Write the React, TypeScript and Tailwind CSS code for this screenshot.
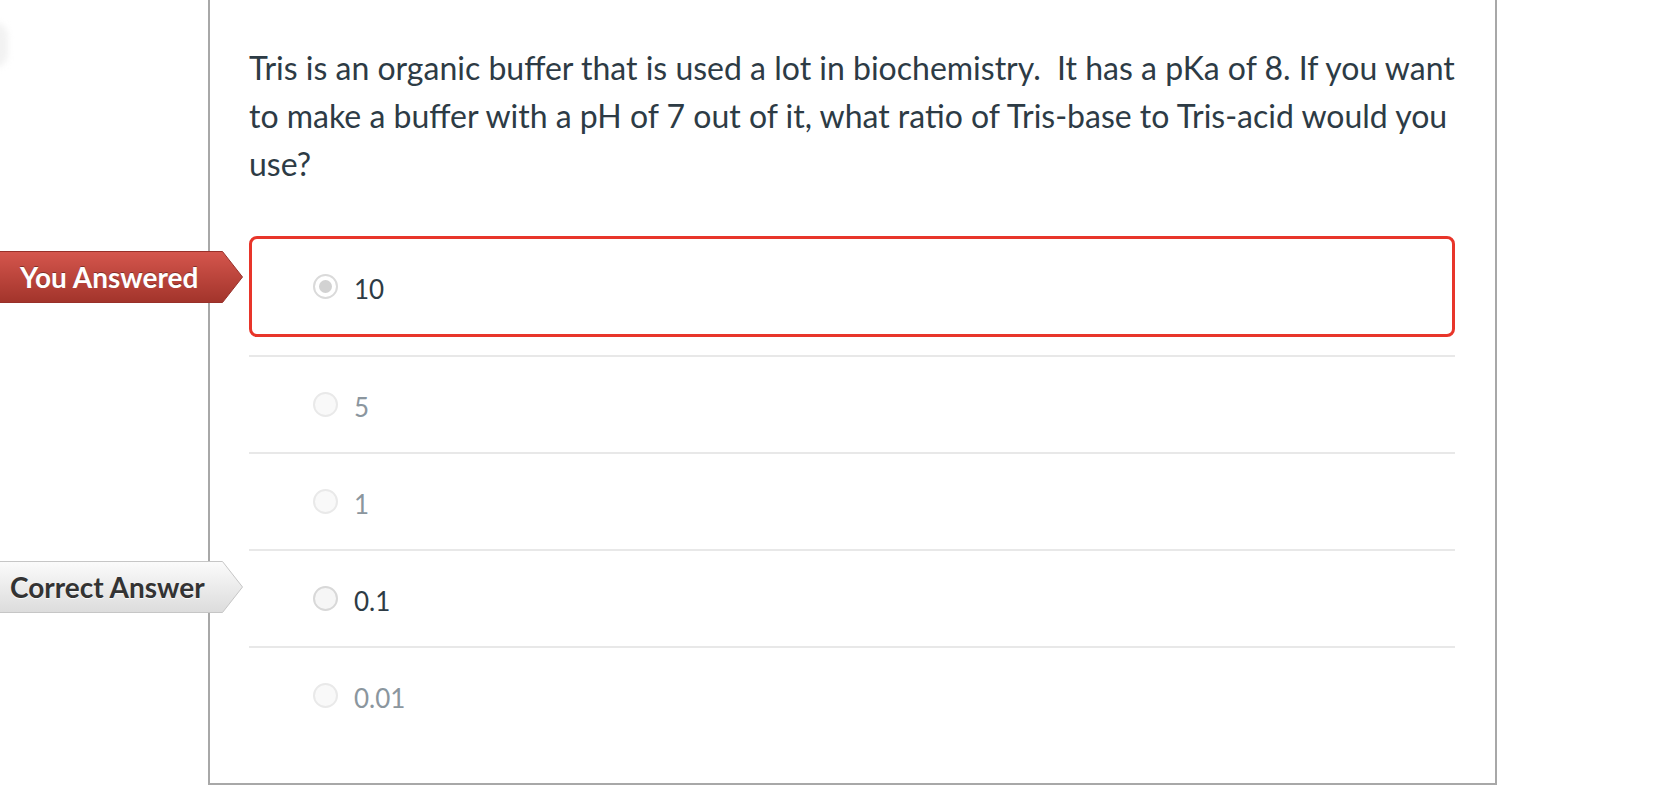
import React from "react";

function Badge({
  label,
  variant,
}: {
  label: string;
  variant: "red" | "gray";
}) {
  const red = variant === "red";
  const gid = red ? "gradRed" : "gradGray";
  return (
    <div className="relative h-[52px] w-[244px]">
      <svg
        className="absolute left-0 top-0"
        width="244"
        height="52"
        viewBox="0 0 244 52"
      >
        <defs>
          <linearGradient id={gid} x1="0" y1="0" x2="0" y2="1">
            {red ? (
              <>
                <stop offset="0" stopColor="#d5564d" />
                <stop offset="1" stopColor="#a2342b" />
              </>
            ) : (
              <>
                <stop offset="0" stopColor="#fbfbfb" />
                <stop offset="1" stopColor="#dcdcdc" />
              </>
            )}
          </linearGradient>
        </defs>
        <path
          d="M-2 0.5 H222.5 L242.5 26 L222.5 51.5 H-2 Z"
          fill={`url(#${gid})`}
          stroke={red ? "#98302a" : "#c6c6c6"}
          strokeWidth="1"
        />
      </svg>
      <div
        className={
          red
            ? "relative flex h-full w-[224px] items-center whitespace-nowrap pl-[20px] text-[28px] font-bold text-white [text-shadow:0_-1px_0_rgba(0,0,0,0.35)]"
            : "relative flex h-full w-[224px] items-center whitespace-nowrap pl-[10px] text-[28px] font-bold text-[#333333] [text-shadow:0_1px_0_rgba(255,255,255,0.8)]"
        }
      >
        {label}
      </div>
    </div>
  );
}

function Radio({ kind }: { kind: "selected" | "correct" | "muted" }) {
  if (kind === "selected") {
    return (
      <div className="flex h-[25px] w-[25px] shrink-0 items-center justify-center rounded-full border-2 border-[#dadada] bg-white">
        <div className="h-[13px] w-[13px] rounded-full bg-[#d2d2d2]" />
      </div>
    );
  }
  if (kind === "correct") {
    return (
      <div className="h-[25px] w-[25px] shrink-0 rounded-full border-2 border-[#d8d8d8] bg-[#f6f6f6]" />
    );
  }
  return (
    <div className="h-[25px] w-[25px] shrink-0 rounded-full border-2 border-[#e9e9e9] bg-[#f9f9f9]" />
  );
}

function Row({
  value,
  kind,
  badge,
}: {
  value: string;
  kind: "correct" | "muted";
  badge?: React.ReactNode;
}) {
  return (
    <div className="relative flex h-[97px] items-center border-t-2 border-[#e8e8e8] pl-[64px]">
      {badge && <div className="absolute left-[-249px] top-[10px]">{badge}</div>}
      <Radio kind={kind} />
      <span
        className={
          kind === "correct"
            ? "ml-[16px] translate-y-[3px] text-[26px] text-[#2d3b45]"
            : "ml-[16px] translate-y-[3px] text-[26px] text-[#8b969e]"
        }
      >
        {value}
      </span>
    </div>
  );
}

export default function App() {
  return (
    <div className="relative h-[790px] w-[1660px] overflow-hidden bg-white font-['Lato','Liberation_Sans',sans-serif]">
      <div className="absolute left-[-22px] top-[22px] h-[46px] w-[30px] rounded-full bg-[#f2f2f2] blur-[3px]" />
      <div className="ml-[208px] w-[1289px] border-x-2 border-b-2 border-[#a8a8a8] pb-[40px] pl-[39px] pr-[40px] pt-[44px]">
        <p className="whitespace-nowrap text-[32px] leading-[48px] text-[#2d3b45]">
          Tris is an organic buffer that is used a lot in biochemistry.{"\u00a0"} It has a pKa of 8. If you want
          <br />
          to make a buffer with a pH of 7 out of it, what ratio of Tris-base to Tris-acid would you
          <br />
          use?
        </p>
        <div className="mt-[48px]">
          <div className="relative mb-[18px] flex h-[101px] items-center rounded-[8px] border-[3px] border-[#e8352a] pl-[61px]">
            <div className="absolute left-[-252px] top-[12px]">
              <Badge label="You Answered" variant="red" />
            </div>
            <Radio kind="selected" />
            <span className="ml-[16px] translate-y-[3px] text-[26px] text-[#2d3b45]">10</span>
          </div>
          <Row value="5" kind="muted" />
          <Row value="1" kind="muted" />
          <Row
            value="0.1"
            kind="correct"
            badge={<Badge label="Correct Answer" variant="gray" />}
          />
          <Row value="0.01" kind="muted" />
        </div>
      </div>
    </div>
  );
}
